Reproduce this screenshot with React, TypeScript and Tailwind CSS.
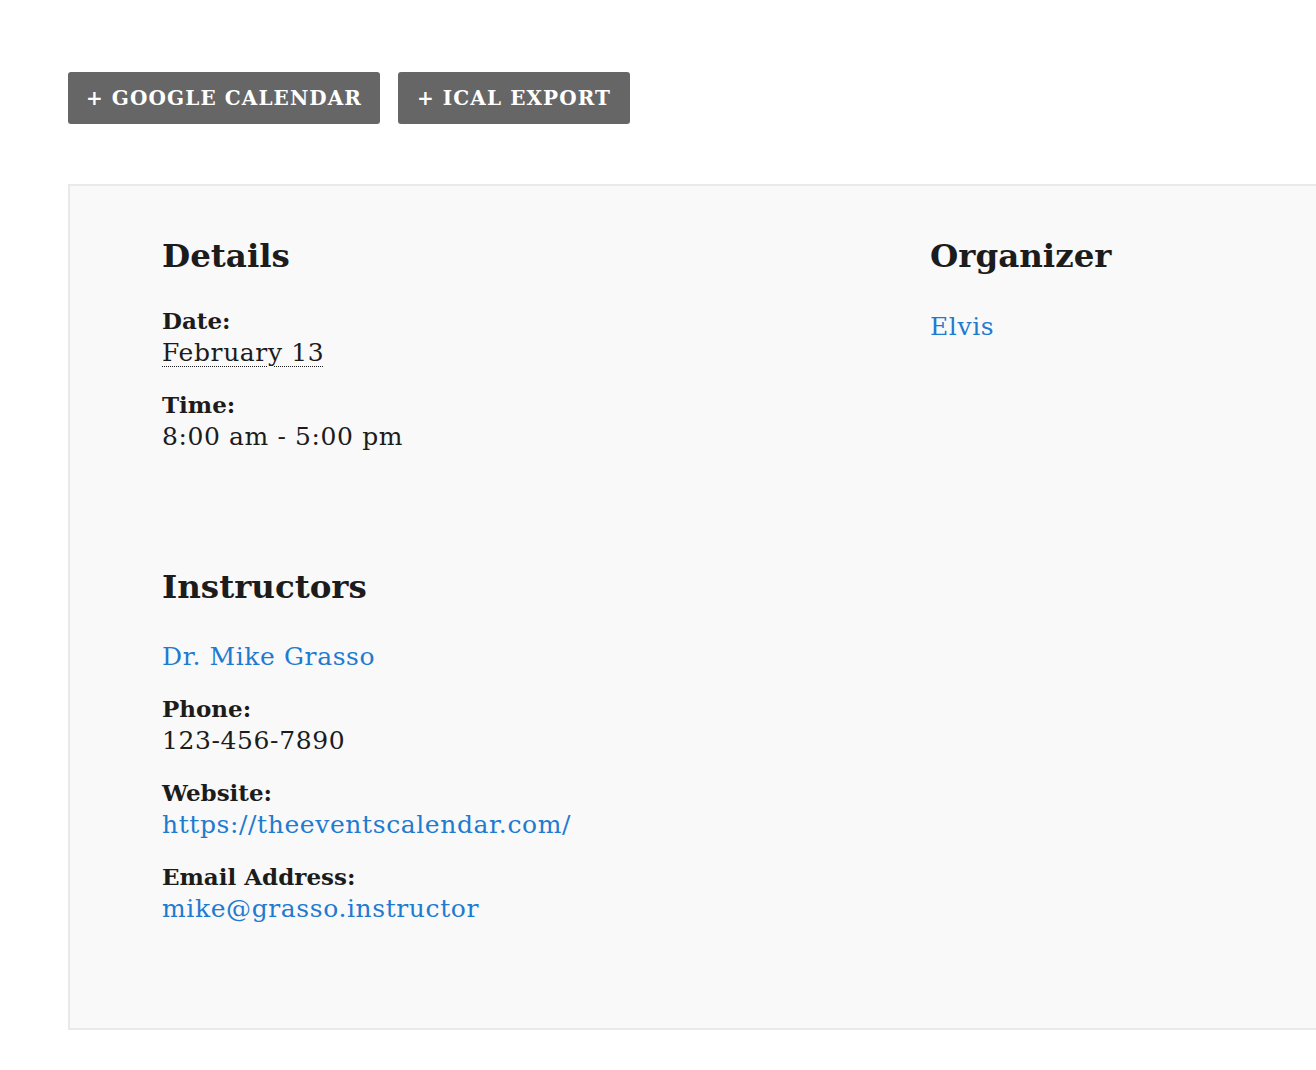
export default function App() {
  const serif = { fontFamily: '"DejaVu Serif", "Liberation Serif", serif' }
  return (
    <div className="min-h-[1070px] w-full overflow-hidden bg-white text-[#1c1c1c]" style={serif}>
      <div className="pl-[68px] pt-[72px]">
        <div className="flex gap-[18px]">
          <a className="flex h-[52px] w-[312px] items-center justify-center rounded-[3px] bg-[#666666] text-[20px] font-bold tracking-[1.1px] text-white">
            + GOOGLE CALENDAR
          </a>
          <a className="flex h-[52px] w-[232px] items-center justify-center rounded-[3px] bg-[#666666] text-[20px] font-bold tracking-[1.1px] text-white">
            + ICAL EXPORT
          </a>
        </div>

        <div className="mt-[60px] w-[1400px] border-2 border-[#e9e9e9] bg-[#f9f9f9] pb-[103px] pl-[92px] pt-[46px]">
          <div className="flex">
            <div className="w-[768px]">
              <h2 className="text-[32.5px] font-bold leading-[48px]">Details</h2>
              <dl className="mt-[25px] text-[25px] leading-[32px] tracking-[0.6px]">
                <dt className="text-[23px] font-bold tracking-normal">Date:</dt>
                <dd>
                  <abbr className="underline decoration-dotted decoration-1 underline-offset-[5px]" title="2025-02-13">
                    February 13
                  </abbr>
                </dd>
                <dt className="mt-[20px] text-[23px] font-bold tracking-normal">Time:</dt>
                <dd>8:00 am - 5:00 pm</dd>
              </dl>

              <h2 className="mt-[110px] text-[32.5px] font-bold leading-[48px]">Instructors</h2>
              <div className="mt-[30px] text-[25px] leading-[32px] tracking-[0.6px]">
                <a className="text-[#1f7bd0]">Dr. Mike Grasso</a>
              </div>
              <dl className="mt-[20px] text-[25px] leading-[32px] tracking-[0.6px]">
                <dt className="text-[23px] font-bold tracking-normal">Phone:</dt>
                <dd>123-456-7890</dd>
                <dt className="mt-[20px] text-[23px] font-bold tracking-normal">Website:</dt>
                <dd>
                  <a className="text-[#1f7bd0]">https://theeventscalendar.com/</a>
                </dd>
                <dt className="mt-[20px] text-[23px] font-bold tracking-normal">Email Address:</dt>
                <dd>
                  <a className="text-[#1f7bd0]">mike@grasso.instructor</a>
                </dd>
              </dl>
            </div>

            <div>
              <h2 className="text-[32.5px] font-bold leading-[48px]">Organizer</h2>
              <div className="mt-[31px] text-[25px] leading-[32px] tracking-[0.6px]">
                <a className="text-[#1f7bd0]">Elvis</a>
              </div>
            </div>
          </div>
        </div>
      </div>
    </div>
  )
}
